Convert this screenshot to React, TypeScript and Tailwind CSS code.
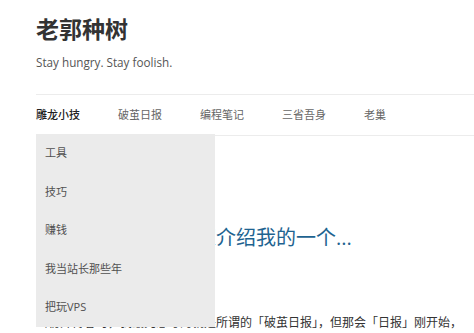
import React from "react";

const NAV = ["雕龙小技", "破茧日报", "编程笔记", "三省吾身", "老巢"];
const SUB = ["工具", "技巧", "赚钱", "我当站长那些年", "把玩VPS"];

export default function App() {
  return (
    <div className="h-[333px] w-[474px] overflow-hidden bg-white font-['Open_Sans','Noto_Sans_CJK_SC',sans-serif]">
      <header className="pl-[36px] pt-[18px]">
        <h1 className="text-[23px] font-bold leading-[23px] text-[#333]">老郭种树</h1>
        <p className="mt-[13px] text-[11.7px] leading-[16px] text-[#555]">Stay hungry. Stay foolish.</p>
      </header>

      <nav className="relative z-10 ml-[36px] mt-[24px] flex h-[42px] items-stretch gap-[38px] border-y border-[#ececec] text-[11px]">
        {NAV.map((item, i) => (
          <div key={item} className="relative flex items-center">
            <span className={i === 0 ? "font-medium text-[#222]" : "text-[#666]"}>{item}</span>
            {i === 0 && (
              <ul className="absolute left-0 top-[calc(100%-1px)] w-[179px] bg-[#ebebeb]">
                {SUB.map((s) => (
                  <li key={s} className="flex h-[38.5px] items-center pl-[9px] text-[#505050]">
                    {s}
                  </li>
                ))}
              </ul>
            )}
          </div>
        ))}
      </nav>

      <main className="w-[470px] pl-[36px]">
        <h2 className="mt-[90px] text-[20px] leading-[24px] text-[#1e6390]">用一篇短文来向大家介绍我的一个...</h2>
        <p className="mt-[63px] text-[12px] leading-[20px] text-[#333]">
          当初开博客时，我最先想写的就是所谓的「破茧日报」，但那会「日报」刚开始，很多想法都还没有成形。
        </p>
      </main>
    </div>
  );
}
